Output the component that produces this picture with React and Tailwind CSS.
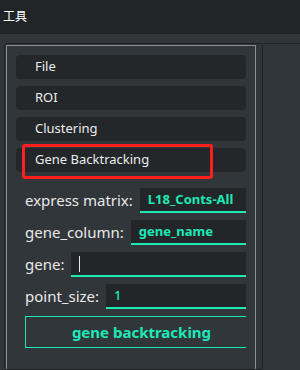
const menuItems = ['File', 'ROI', 'Clustering', 'Gene Backtracking'];

function Field({ label, value, bold = true, cursor = false }) {
  return (
    <div className="flex items-center h-[25px]">
      <span className="text-[15px] text-[#e8e8e8] whitespace-nowrap leading-none">{label}</span>
      <div className="ml-[7px] flex-1 h-[25px] bg-[#232629] border-b-2 border-[#1de9b6] flex items-center pl-2">
        {cursor ? (
          <span className="w-px h-4 bg-[#e8e8e8]" />
        ) : (
          <span className={`text-[13px] text-[#1de9b6] leading-none ${bold ? 'font-bold' : 'font-medium'}`}>
            {value}
          </span>
        )}
      </div>
    </div>
  );
}

export default function App() {
  return (
    <div
      className="relative w-[300px] h-[370px] overflow-hidden bg-[#31363b] flex flex-col"
      style={{ fontFamily: '"Noto Sans", "Noto Sans CJK SC", sans-serif' }}
    >
      <div className="h-[34px] shrink-0 bg-[#222528] flex items-center pl-[3px] text-[12px] text-white">
        工具
      </div>

      <div className="flex flex-1 min-h-0 pt-[9px] pl-[4px]">
        <div className="w-[259px] shrink-0 border border-[#1f2225] rounded-[3px] pl-px pt-px flex flex-col">
          <div className="w-[250px] flex-1 border-l border-t border-r border-[#8b8f93] p-[9px] pb-0">
            <div className="overflow-hidden w-[230px] h-full">
              <div className="flex flex-col gap-[7px]">
                {menuItems.map((item) => (
                  <div
                    key={item}
                    className="h-6 rounded-[4px] bg-[#24272a] flex items-center pl-[19px] text-[13px] text-[#ececec]"
                  >
                    {item}
                  </div>
                ))}
              </div>

              <div className="mt-4 pl-[9px] w-[242px] flex flex-col gap-[7px]">
                <Field label="express matrix:" value="L18_Conts-All" />
                <Field label="gene_column:" value="gene_name" />
                <Field label="gene:" cursor />
                <Field label="point_size:" value="1" bold={false} />
                <div className="h-8 border border-[#1de9b6] flex items-center justify-center text-[15px] font-bold text-[#1de9b6]">
                  gene backtracking
                </div>
              </div>
            </div>
          </div>
        </div>
        <div className="flex-1 border-t border-[#1f2225]" />
      </div>

      <div className="absolute left-[22px] top-[144px] w-[191px] h-[35px] border-[3px] border-[#ff1f1f] rounded-[3px]" />
    </div>
  );
}
